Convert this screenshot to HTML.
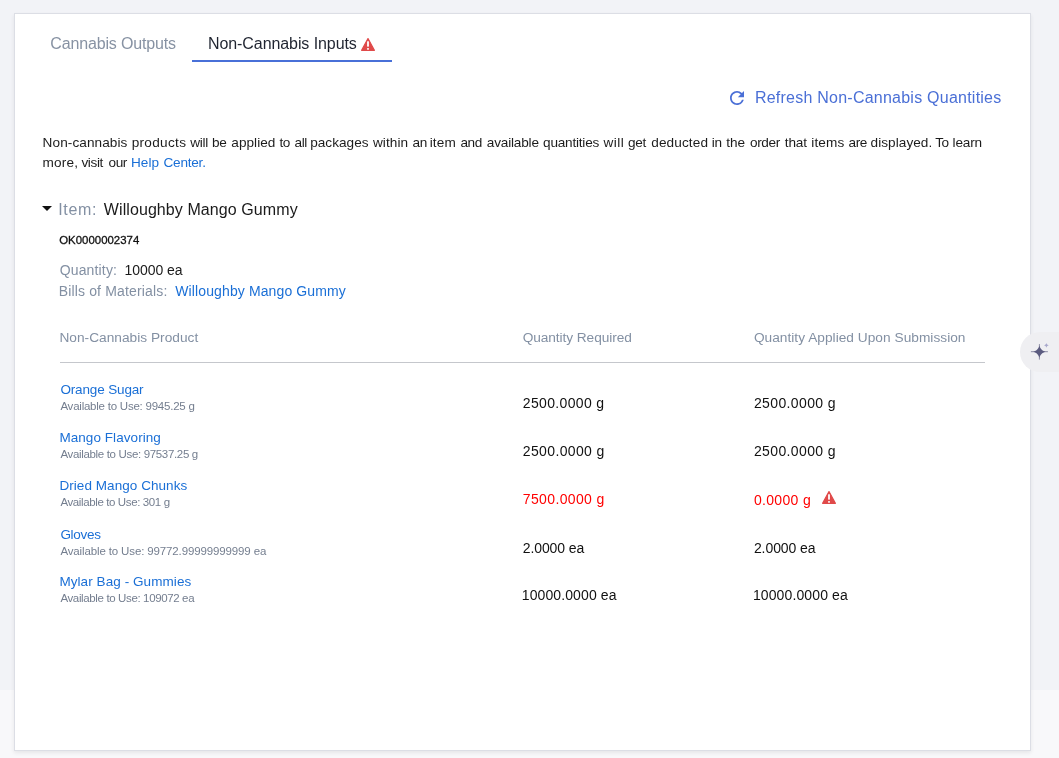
<!DOCTYPE html>
<html><head><meta charset="utf-8"><title>Non-Cannabis Inputs</title><style>
html,body{margin:0;padding:0;width:1059px;height:758px;overflow:hidden;font-family:"Liberation Sans",sans-serif;}
body{background:#f2f3f7;position:relative;}
.a{position:absolute;}
.bot{position:absolute;left:0;top:690px;width:1059px;height:68px;background:#f8f8fa;}
.card{position:absolute;left:14px;top:13px;width:1015px;height:736px;background:#fff;border:1px solid #dcdee5;box-shadow:0 2px 4px rgba(0,0,0,0.075);}
.wrap{position:absolute;left:0;top:0;width:1059px;height:758px;will-change:transform;}
.t{position:absolute;white-space:pre;line-height:1;}
.fab{position:absolute;left:1020px;top:332px;width:60px;height:40px;border-radius:20px;background:#efeff2;}
</style></head><body>
<div class="bot"></div>
<div class="card"></div>
<div class="wrap">
<svg class="a" style="left:361px;top:38px" width="14" height="13" viewBox="0 0 14 13"><path d="M7 0.6 L13.4 12.3 L0.6 12.3 Z" fill="#e04a4a" stroke="#e04a4a" stroke-width="1.2" stroke-linejoin="round"/><rect x="6.1" y="3.3" width="1.8" height="5.3" fill="#fff"/><rect x="6.1" y="10.1" width="1.8" height="1.6" fill="#fff"/></svg>
<div class="a" style="left:192px;top:60px;width:200px;height:2px;background:#4870d8"></div>
<svg class="a" style="left:730px;top:91px" width="14" height="14" viewBox="4 4 16 16"><path fill="#4a6fd6" d="M17.65 6.35A7.958 7.958 0 0 0 12 4c-4.42 0-7.99 3.58-7.99 8s3.57 8 7.99 8c3.73 0 6.84-2.55 7.73-6h-2.08A5.990 5.990 0 0 1 12 18c-3.31 0-6-2.69-6-6s2.69-6 6-6c1.660 0 3.14.69 4.22 1.78L13 11h7V4l-2.35 2.35z"/></svg>
<div class="a" style="left:42px;top:206px;width:0;height:0;border-left:5px solid transparent;border-right:5px solid transparent;border-top:5px solid #111"></div>
<div class="a" style="left:60px;top:362px;width:925px;height:1px;background:#c5c7cc"></div>
<svg class="a" style="left:822px;top:491px" width="14" height="13" viewBox="0 0 14 13"><path d="M7 0.6 L13.4 12.3 L0.6 12.3 Z" fill="#e04a4a" stroke="#e04a4a" stroke-width="1.2" stroke-linejoin="round"/><rect x="6.1" y="3.3" width="1.8" height="5.3" fill="#fff"/><rect x="6.1" y="10.1" width="1.8" height="1.6" fill="#fff"/></svg>
<div class="t" style="left:50.3px;top:36px;font-size:16px;color:#8792a3;letter-spacing:-0.153px;">Cannabis Outputs</div>
<div class="t" style="left:208.0px;top:36px;font-size:16px;color:#1f2430;letter-spacing:-0.083px;">Non-Cannabis Inputs</div>
<div class="t" style="left:754.9px;top:90px;font-size:16px;color:#4a6fd6;letter-spacing:0.237px;">Refresh Non-Cannabis Quantities</div>
<div class="t" style="left:42.6px;top:136px;font-size:13.6px;color:#1c1c1c;letter-spacing:0.082px;">Non-cannabis</div>
<div class="t" style="left:131.7px;top:136px;font-size:13.6px;color:#1c1c1c;letter-spacing:0.3px;">products</div>
<div class="t" style="left:190.3px;top:136px;font-size:13.6px;color:#1c1c1c;letter-spacing:-0.267px;">will</div>
<div class="t" style="left:212.1px;top:136px;font-size:13.6px;color:#1c1c1c;letter-spacing:-0.4px;">be</div>
<div class="t" style="left:231.3px;top:136px;font-size:13.6px;color:#1c1c1c;letter-spacing:0.033px;">applied</div>
<div class="t" style="left:279.4px;top:136px;font-size:13.6px;color:#1c1c1c;letter-spacing:-0.4px;">to</div>
<div class="t" style="left:294.5px;top:136px;font-size:13.6px;color:#1c1c1c;letter-spacing:-0.4px;">all</div>
<div class="t" style="left:310.2px;top:136px;font-size:13.6px;color:#1c1c1c;letter-spacing:0.029px;">packages</div>
<div class="t" style="left:372.9px;top:136px;font-size:13.6px;color:#1c1c1c;letter-spacing:0.08px;">within</div>
<div class="t" style="left:412.5px;top:136px;font-size:13.6px;color:#1c1c1c;letter-spacing:-0.4px;">an</div>
<div class="t" style="left:429.7px;top:136px;font-size:13.6px;color:#1c1c1c;letter-spacing:0.167px;">item</div>
<div class="t" style="left:460.4px;top:136px;font-size:13.6px;color:#1c1c1c;letter-spacing:-0.4px;">and</div>
<div class="t" style="left:486.8px;top:136px;font-size:13.6px;color:#1c1c1c;letter-spacing:-0.187px;">available</div>
<div class="t" style="left:543.1px;top:136px;font-size:13.6px;color:#1c1c1c;letter-spacing:-0.222px;">quantities</div>
<div class="t" style="left:603.6px;top:136px;font-size:13.6px;color:#1c1c1c;letter-spacing:0.4px;">will</div>
<div class="t" style="left:628.0px;top:136px;font-size:13.6px;color:#1c1c1c;letter-spacing:-0.35px;">get</div>
<div class="t" style="left:651.2px;top:136px;font-size:13.6px;color:#1c1c1c;letter-spacing:0.129px;">deducted</div>
<div class="t" style="left:711.7px;top:136px;font-size:13.6px;color:#1c1c1c;letter-spacing:-0.3px;">in</div>
<div class="t" style="left:726.3px;top:136px;font-size:13.6px;color:#1c1c1c;letter-spacing:-0.1px;">the</div>
<div class="t" style="left:749.9px;top:136px;font-size:13.6px;color:#1c1c1c;letter-spacing:-0.325px;">order</div>
<div class="t" style="left:784.8px;top:136px;font-size:13.6px;color:#1c1c1c;letter-spacing:-0.133px;">that</div>
<div class="t" style="left:811.3px;top:136px;font-size:13.6px;color:#1c1c1c;letter-spacing:0.1px;">items</div>
<div class="t" style="left:848.5px;top:136px;font-size:13.6px;color:#1c1c1c;letter-spacing:-0.4px;">are</div>
<div class="t" style="left:870.6px;top:136px;font-size:13.6px;color:#1c1c1c;letter-spacing:0.044px;">displayed.</div>
<div class="t" style="left:935.2px;top:136px;font-size:13.6px;color:#1c1c1c;letter-spacing:-0.4px;">To</div>
<div class="t" style="left:952.6px;top:136px;font-size:13.6px;color:#1c1c1c;letter-spacing:-0.175px;">learn</div>
<div class="t" style="left:42.4px;top:156px;font-size:13.6px;color:#1c1c1c;letter-spacing:0.2px;">more,</div>
<div class="t" style="left:81.4px;top:156px;font-size:13.6px;color:#1c1c1c;letter-spacing:-0.35px;">visit</div>
<div class="t" style="left:108.5px;top:156px;font-size:13.6px;color:#1c1c1c;letter-spacing:-0.4px;">our</div>
<div class="t" style="left:131.0px;top:156px;font-size:13.6px;color:#1a6fd6;">Help</div>
<div class="t" style="left:163.5px;top:156px;font-size:13.6px;color:#1a6fd6;letter-spacing:-0.233px;">Center.</div>
<div class="t" style="left:58.2px;top:202px;font-size:16px;color:#8390a3;letter-spacing:0.675px;">Item:</div>
<div class="t" style="left:103.8px;top:202px;font-size:16px;color:#1a1a1a;letter-spacing:0.086px;">Willoughby Mango Gummy</div>
<div class="t" style="left:59.2px;top:235px;font-size:11.4px;color:#111111;letter-spacing:0.027px;-webkit-text-stroke:0.3px #111;">OK0000002374</div>
<div class="t" style="left:59.7px;top:263px;font-size:14px;color:#8390a3;letter-spacing:0.15px;">Quantity:</div>
<div class="t" style="left:124.5px;top:263px;font-size:14px;color:#1a1a1a;letter-spacing:-0.043px;">10000 ea</div>
<div class="t" style="left:58.7px;top:284px;font-size:14px;color:#8390a3;letter-spacing:0.156px;">Bills of Materials:</div>
<div class="t" style="left:175.3px;top:284px;font-size:14px;color:#1a6fd6;letter-spacing:0.114px;">Willoughby Mango Gummy</div>
<div class="t" style="left:59.4px;top:331px;font-size:13.7px;color:#8390a3;letter-spacing:0.021px;">Non-Cannabis Product</div>
<div class="t" style="left:522.7px;top:331px;font-size:13.7px;color:#8390a3;letter-spacing:-0.075px;">Quantity Required</div>
<div class="t" style="left:753.9px;top:331px;font-size:13.7px;color:#8390a3;letter-spacing:0.026px;">Quantity Applied Upon Submission</div>
<div class="t" style="left:60.4px;top:383px;font-size:13.5px;color:#1a6fd6;letter-spacing:-0.145px;">Orange Sugar</div>
<div class="t" style="left:60.4px;top:401px;font-size:11.5px;color:#747e8f;letter-spacing:-0.231px;">Available to Use: 9945.25 g</div>
<div class="t" style="left:522.8px;top:396px;font-size:14px;color:#111111;letter-spacing:0.35px;">2500.0000 g</div>
<div class="t" style="left:753.9px;top:396px;font-size:14px;color:#111111;letter-spacing:0.38px;">2500.0000 g</div>
<div class="t" style="left:59.4px;top:431px;font-size:13.5px;color:#1a6fd6;letter-spacing:0.064px;">Mango Flavoring</div>
<div class="t" style="left:60.4px;top:449px;font-size:11.5px;color:#747e8f;letter-spacing:-0.333px;">Available to Use: 97537.25 g</div>
<div class="t" style="left:522.8px;top:444px;font-size:14px;color:#111111;letter-spacing:0.36px;">2500.0000 g</div>
<div class="t" style="left:753.9px;top:444px;font-size:14px;color:#111111;letter-spacing:0.38px;">2500.0000 g</div>
<div class="t" style="left:59.4px;top:479px;font-size:13.5px;color:#1a6fd6;letter-spacing:0.059px;">Dried Mango Chunks</div>
<div class="t" style="left:60.4px;top:497px;font-size:11.5px;color:#747e8f;letter-spacing:-0.382px;">Available to Use: 301 g</div>
<div class="t" style="left:522.8px;top:492px;font-size:14px;color:#ff0000;letter-spacing:0.36px;">7500.0000 g</div>
<div class="t" style="left:753.9px;top:493px;font-size:14px;color:#ff0000;letter-spacing:0.329px;">0.0000 g</div>
<div class="t" style="left:60.4px;top:528px;font-size:13.5px;color:#1a6fd6;letter-spacing:-0.3px;">Gloves</div>
<div class="t" style="left:60.4px;top:546px;font-size:11.5px;color:#747e8f;letter-spacing:-0.132px;">Available to Use: 99772.99999999999 ea</div>
<div class="t" style="left:522.8px;top:541px;font-size:14px;color:#111111;letter-spacing:-0.112px;">2.0000 ea</div>
<div class="t" style="left:753.9px;top:541px;font-size:14px;color:#111111;letter-spacing:-0.075px;">2.0000 ea</div>
<div class="t" style="left:59.4px;top:575px;font-size:13.5px;color:#1a6fd6;letter-spacing:0.072px;">Mylar Bag - Gummies</div>
<div class="t" style="left:60.4px;top:593px;font-size:11.5px;color:#747e8f;letter-spacing:-0.365px;">Available to Use: 109072 ea</div>
<div class="t" style="left:521.8px;top:588px;font-size:14px;color:#111111;letter-spacing:0.1px;">10000.0000 ea</div>
<div class="t" style="left:752.9px;top:588px;font-size:14px;color:#111111;letter-spacing:0.125px;">10000.0000 ea</div>
</div>
<div class="fab"><svg class="a" style="left:0px;top:0px" width="40" height="40" viewBox="0 0 40 40"><path d="M19.40 13.70 C20.70 17.20 21.90 18.40 25.40 19.70 C21.90 21.00 20.70 22.20 19.40 25.70 C18.10 22.20 16.90 21.00 13.40 19.70 C16.90 18.40 18.10 17.20 19.40 13.70 Z" fill="#5c5c80"/><path d="M19.4 12.1 V27.6 M10.9 19.7 H27.9" stroke="#5c5c80" stroke-width="0.9" opacity="0.75"/><path d="M26.40 10.90 C26.90 12.30 27.40 12.80 28.80 13.30 C27.40 13.80 26.90 14.30 26.40 15.70 C25.90 14.30 25.40 13.80 24.00 13.30 C25.40 12.80 25.90 12.30 26.40 10.90 Z" fill="#a8a8cc"/></svg></div>
</body></html>
